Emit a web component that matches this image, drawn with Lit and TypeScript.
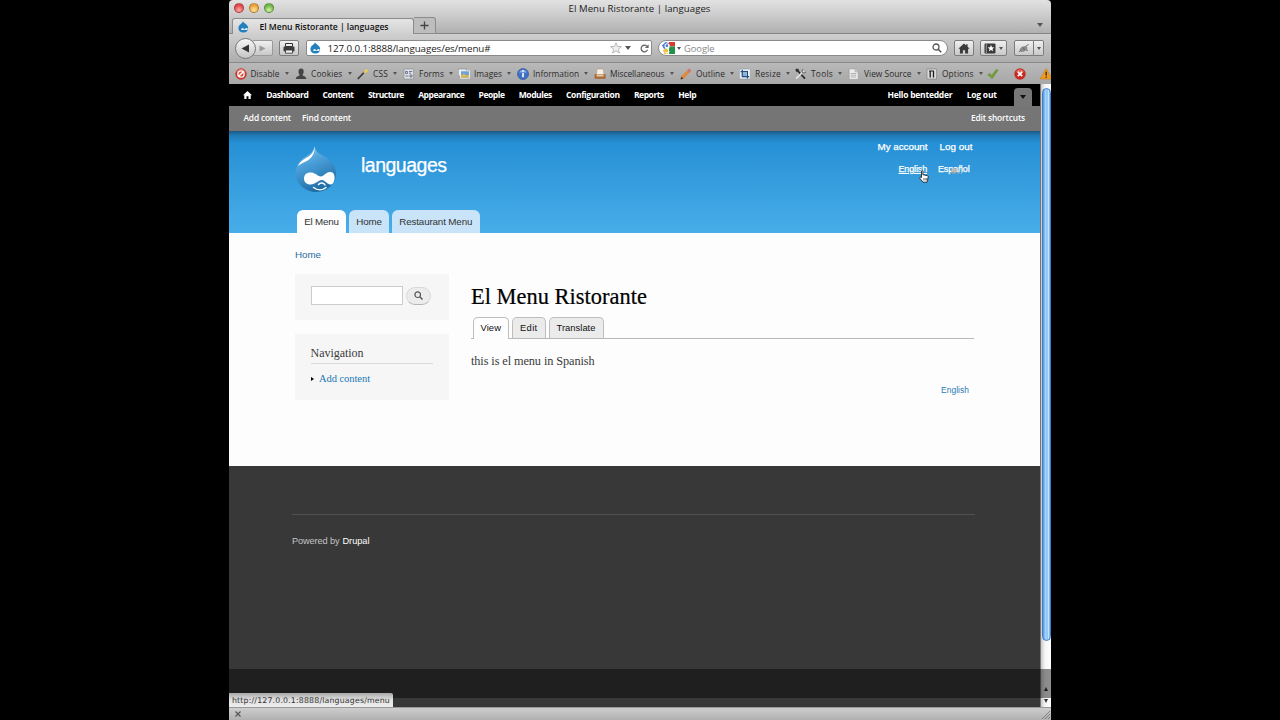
import { LitElement, html, svg, css } from "lit";
import { customElement } from "lit/decorators.js";

const LUCIDA = '"Open Sans", "Noto Sans", sans-serif';
const VERA = '"DejaVu Sans", sans-serif';
const HELV = '"Liberation Sans", Arial, sans-serif';
const SERIF = '"Liberation Serif", Georgia, serif';

const ctx = document.createElement("canvas").getContext("2d")!;

/** Text tracked so that its advance equals `width`. */
const fit = (text: string, width: number, size: number, family = LUCIDA, weight = 400) => {
  ctx.font = `${weight} ${size}px ${family}`;
  const spacing = (width - ctx.measureText(text).width) / text.length;
  return html`<span class="fit" style="width:${width}px;font:${weight} ${size}px/1 ${family};letter-spacing:${spacing.toFixed(3)}px">${text}</span>`;
};

const icons: Record<string, unknown> = {
  disable: svg`<circle cx="6" cy="6" r="5.7" fill="#c8372c"/><path d="M1.6 4a5 5 0 0 1 8.8 0" fill="none" stroke="#e98478" stroke-width="1"/><circle cx="6" cy="6" r="3.2" fill="#d9503f" stroke="#fff" stroke-width="1.3"/><path d="M3.9 8.1l4.2-4.2" stroke="#fff" stroke-width="1.4"/>`,
  cookies: svg`<path d="M3.5 3.4a2.6 3 0 0 1 5.2 0c0 1.7-.7 2.6-1.2 3.4 0 1.5 3.8 1.4 3.8 4.2H.8c0-2.8 3.8-2.7 3.8-4.2-.5-.8-1.1-1.7-1.1-3.4z" fill="#454545"/>`,
  css: svg`<path d="M.8 11L7.5 4" stroke="#3b3b3b" stroke-width="1.8"/><path d="M7 5l2.4-2.6" stroke="#d8c25a" stroke-width="2.4"/><path d="M9.6.8l.4 1.4 1.5.4-1.4.7-.3 1.4-.9-1.3-1.5.1 1-1z" fill="#f2d842"/>`,
  forms: svg`<path d="M1 1h9.6v10H1z" fill="#dfe1e4" stroke="#8b8f97" stroke-width=".7"/><path d="M2.5 3.5h2v2h-2zM6 3.5h3.2M6 5.2h2M2.5 8h3M7 7h2v2H7z" fill="none" stroke="#5d6d88" stroke-width=".9"/>`,
  images: svg`<path d="M.3 1h8v7h-8z" fill="#f4f4ee" stroke="#7b8186" stroke-width=".6"/><path d="M2.5 2.8h9v7.4h-9z" fill="#6ea1d9" stroke="#f2f2f2" stroke-width=".9"/><path d="M3 9.8V7.6l3-2 2.4 1.8 2.6-.6v3z" fill="#d8b85c"/>`,
  info: svg`<circle cx="6" cy="6" r="5.5" fill="#3f72c4" stroke="#2b4f92" stroke-width=".6"/><path d="M2 4.4a4.3 4.3 0 0 1 8 0z" fill="#89aee6"/><path d="M6 2.2v1.5M6 4.9v4.4" stroke="#fff" stroke-width="1.6"/>`,
  misc: svg`<path d="M3 1h6.4l.6 6H2.4z" fill="#f5efe4" stroke="#b09572" stroke-width=".6"/><path d="M.6 6.2h11v4.6H.6z" fill="#a86a36"/><path d="M2.6 6.5h7v2h-7z" fill="#e4cba6"/>`,
  outline: svg`<path d="M2.2 9.8l6.5-6.6" stroke="#e0893a" stroke-width="3.2"/><path d="M8.4 3.5l1.8-1.8" stroke="#c9776c" stroke-width="3.2"/><path d="M.5 11.5l.8-3 2.2 2.2z" fill="#4b3a2b"/>`,
  resize: svg`<path d="M.4 1h11v10H.4z" fill="#e9edf2" stroke="#909aa6" stroke-width=".6"/><path d="M3.3 1.8v6.8h6.9M1.6 3.6h6.8v6.8" fill="none" stroke="#254c78" stroke-width="1.2"/><path d="M4 4.2h3.8v3.8H4z" fill="#8db4dc"/>`,
  tools: svg`<path d="M1 1l9 9.6" stroke="#292929" stroke-width="1.7"/><path d="M1 10.6L9 3" stroke="#e4e4e4" stroke-width="1.6"/><path d="M8.3 1.2a2 2 0 1 0 2.6 2.6" fill="none" stroke="#787878" stroke-width="1.2"/><path d="M.4 2.2L3 .4l1.4 2L1.6 4.2z" fill="#353535"/>`,
  source: svg`<path d="M1.2.8h6l3 3v7.6h-9z" fill="#ececec" stroke="#969696" stroke-width=".6"/><path d="M7.2.8v3h3M2.7 5.5h5.5M2.7 7.2h5.5M2.7 9h5.5" fill="none" stroke="#a3a3a3" stroke-width=".8"/>`,
  options: svg`<path d="M1 1h9.6v10H1z" fill="#dcdcdc" stroke="#838383" stroke-width=".7"/><path d="M4.200 3v6.400M7.500 3v6.400" stroke="#1c1c1c" stroke-width="1.300"/><path d="M3 3h4.800" stroke="#1c1c1c"/>`,
  check: svg`<path d="M.8 6.800l2-1.400 2 2L9.300 1.600l1.800.6L5.200 10.600z" fill="#71a532" stroke="#53801f" stroke-width=".5"/>`,
  error: svg`<circle cx="6" cy="6" r="5.7" fill="#c8291f"/><path d="M1.8 4a4.6 4.6 0 0 1 8.4 0z" fill="#dd6b5f"/><path d="M3.8 3.8l4.4 4.4M8.2 3.8L3.8 8.2" stroke="#fff" stroke-width="1.7"/>`,
  warn: svg`<path d="M6.2.6L12 11H.2z" fill="#f09c20" stroke="#c97a12" stroke-width=".6"/><path d="M6.2 3.8v3.6M6.2 8.4v1.4" stroke="#3a2a10" stroke-width="1.4"/>`,
};
const icon = (name: string) => html`<svg class="ic" viewBox="0 0 12 12">${icons[name]}</svg>`;

const favicon = html`<svg class="fav" viewBox="0 0 12 13">
  <path d="M5.4.3C6 2 8 2.6 9.7 4.3c2.7 2.9 1.5 8-3.7 8.3C1 12.7-.5 8.5 1 5.5 2 3.6 4.8 2.6 5.4.3z" fill="#2480bd"/>
  <path d="M3.400 8.600c1.400-1.600 2.600.2 3.600.1s2.200-1.400 3.600-.5c.4 1.800-1.600 1.900-3 1-1.400.3-3.400 1.600-4.200-.6z" fill="#fff"/></svg>`;

// [icon, label, label width, item width]
const DEV: [string, string, number, number][] = [
  ["disable", "Disable", 29, 60.5], ["cookies", "Cookies", 31.5, 62], ["css", "CSS", 15, 46],
  ["forms", "Forms", 25, 55], ["images", "Images", 28, 59], ["info", "Information", 46, 77],
  ["misc", "Miscellaneous", 54.5, 86], ["outline", "Outline", 29, 59], ["resize", "Resize", 26, 56],
  ["tools", "Tools", 22, 53], ["source", "View Source", 47.5, 78], ["options", "Options", 31.5, 61],
];
const ADMIN: [string, number][] = [
  ["Dashboard", 42], ["Content", 31], ["Structure", 36], ["Appearance", 46], ["People", 26],
  ["Modules", 33], ["Configuration", 53.5], ["Reports", 30], ["Help", 18],
];

@customElement("app-root")
export class AppRoot extends LitElement {
  static styles = css`
    :host { display: flex; justify-content: center; width: 1280px; height: 720px; background: #000; overflow: hidden; }
    * { box-sizing: border-box; }
    svg { display: block; flex: none; }
    .fit { display: block; flex: none; white-space: nowrap; }
    .window { width: 822px; height: 720px; display: flex; flex-direction: column; border-radius: 4px 4px 0 0; overflow: hidden; position: relative; }
    .row { display: flex; align-items: center; flex: none; }
    .top { height: 34px; background: linear-gradient(#e2e2e2, #cacaca 50%, #b0b0b0); border-bottom: 1px solid #858585; display: flex; flex-direction: column; flex: none; }
    .title { height: 16px; padding-left: 5px; color: #222; }
    .title .fit { margin-top: 1px; }
    .lights { display: flex; gap: 5px; width: 334.5px; }
    .light { width: 10px; height: 10px; border-radius: 50%; border: 1px solid #0004; }
    .red { background: radial-gradient(circle at 50% 75%, #ffb0a8, #e2474b 65%); }
    .amber { background: radial-gradient(circle at 50% 75%, #ffe6a0, #eda239 65%); }
    .green { background: radial-gradient(circle at 50% 75%, #d5f5a8, #6fb548 65%); }
    .tabs { height: 18px; padding-left: 3px; align-items: flex-end; flex: none; display: flex; }
    .tab { height: 17px; width: 182px; border: 1px solid #8c8c8c; border-bottom: 0; border-radius: 3px 3px 0 0; background: linear-gradient(#e5e5e5, #cecece); display: flex; align-items: center; gap: 10.5px; padding-left: 5px; margin-bottom: -1px; color: #111; }
    .plus { height: 17px; width: 22px; border: 1px solid #8c8c8c; border-left: 0; border-radius: 0 3px 0 0; display: flex; align-items: center; justify-content: center; background: #bdbdbd; }
    .tabs .caret { margin: 0 8px 7px auto; }
    .fav { width: 11px; height: 12px; }
    .nav { height: 29px; background: linear-gradient(#cfcfcf, #adadad); border-bottom: 1px solid #888; padding-left: 6px; }
    .btn { height: 16px; border: 1px solid #7c7c7c; border-radius: 2px; background: linear-gradient(#f0f0f0, #c9c9c9); display: flex; align-items: center; justify-content: center; gap: 3px; flex: none; }
    .back { width: 21px; height: 21px; border-radius: 50%; border: 1px solid #777; background: linear-gradient(#f7f7f7, #c4c4c4); display: flex; align-items: center; justify-content: center; z-index: 1; }
    .fwd { width: 21px; margin: 0 6px 0 -4px; border-color: #999; }
    .print { width: 20px; margin-right: 6.5px; }
    .url { width: 346px; height: 16px; flex: none; border: 1px solid #8a8a8a; background: #fff; display: flex; align-items: center; border-radius: 2px; padding-left: 3px; color: #222; }
    .url .fit { margin: 2px 119px 0 7px; }
    .url .star { margin-right: 3px; }
    .url .reload { margin-left: 9px; }
    .search { width: 290px; height: 16px; flex: none; border: 1px solid #8a8a8a; border-radius: 8px; background: #fff; margin: 0 6px; display: flex; align-items: center; padding: 0 5px 0 3px; color: #888; }
    .search .caret { margin: 0 3.5px 0 2px; }
    .search .fit { margin-top: 2px; }
    .search .mag { margin-left: auto; }
    .home { width: 20.5px; margin-right: 5.5px; }
    .book { width: 27px; margin-right: 7.5px; }
    .bug { width: 20px; border-radius: 2px 0 0 2px; }
    .more { width: 10px; border-left: 0; border-radius: 0 2px 2px 0; }
    .caret { width: 0; height: 0; flex: none; border: 3px solid transparent; border-top: 4px solid #555; border-bottom: 0; }
    .caret.s { border-width: 2px; border-top-width: 3px; border-bottom: 0; }
    .dev { height: 21px; background: linear-gradient(#b9b9b9, #a7a7a7); padding-left: 5.5px; color: #2c2c2c; overflow: hidden; }
    .item { display: flex; align-items: center; flex: none; }
    .item .fit { margin: 1px 5px 0 4px; }
    .ic { width: 12px; height: 12px; }
    .ic.sp { margin-right: 15px; }
    .ic.end { margin-left: -1px; }
    .body { flex: 1; display: flex; min-height: 0; }
    .page { width: 811px; display: flex; flex-direction: column; background: #fdfdfd; }
    .admin { height: 22px; background: #000; color: #fff; padding: 0 8px 0 14px; gap: 14.3px; }
    .admin .hello { margin-left: auto; }
    .toggle { align-self: flex-end; width: 18px; height: 18px; border-radius: 4px 4px 0 0; background: #777; display: flex; align-items: center; justify-content: center; margin-left: 3px; }
    .toggle .caret { border-top-color: #111; }
    .shortcuts { height: 25px; background: #757575; color: #fff; padding: 0 15px 0 14.5px; gap: 11px; }
    .shortcuts .edit { margin-left: auto; }
    .header { height: 102px; flex: none; background: linear-gradient(#1d577f 0, #2079b4 4px, #2590d6 12px, #3299db 40px, #48aeea 100%); display: flex; justify-content: space-between; padding: 0 67.5px 0 66px; color: #fff; -webkit-text-stroke: .25px #fff; }
    .brand { display: flex; flex-direction: column; justify-content: space-between; }
    .brandrow { display: flex; padding-top: 14px; gap: 23px; }
    .brandrow .fit { margin-top: 11px; }
    .sitetabs { display: flex; gap: 3px; padding-left: 2px; color: #333; -webkit-text-stroke: 0; }
    .sitetab { height: 23px; border-radius: 6px 6px 0 0; background: #c9e4f8; display: flex; align-items: center; padding: 1px 7.25px 0; }
    .sitetab.on { background: #fdfdfd; }
    .links { display: flex; flex-direction: column; align-items: flex-end; padding-top: 10.5px; gap: 13.5px; }
    .pair { display: flex; gap: 12px; }
    .pair.lang { padding-right: 3px; gap: 11px; }
    .under { text-decoration: underline; }
    .content { height: 233px; flex: none; padding: 17px 66px 0 66px; color: #3b3b3b; }
    .crumb { color: #1d6da3; display: flex; }
    .cols { display: flex; margin-top: 14px; gap: 22px; }
    .side { width: 154px; display: flex; flex-direction: column; gap: 14px; flex: none; }
    .block { background: #f6f6f6; padding: 0 16px 0 15.5px; }
    .find { height: 46px; display: flex; align-items: center; gap: 3px; padding-bottom: 2px; }
    .input { width: 92px; height: 19px; border: 1px solid #ccc; background: #fff; flex: none; }
    .go { width: 25px; height: 18px; border: 1px solid #d8d8d8; border-bottom-color: #b5b5b5; border-radius: 9px; background: #ececec; display: flex; align-items: center; justify-content: center; flex: none; }
    .navblock { height: 66px; padding-top: 13px; }
    .heading { padding-bottom: 4px; border-bottom: 1px solid #dadada; }
    .leaf { display: flex; align-items: center; gap: 5.5px; margin-top: 10px; color: #1c78b5; }
    .tri { width: 0; height: 0; border: 2.5px solid transparent; border-left: 3.5px solid #000; border-right: 0; }
    .main { flex: 1; display: flex; flex-direction: column; }
    .h1 { color: #000; padding-top: 12px; height: 43px; -webkit-text-stroke: .2px #000; }
    .ptabs { display: flex; gap: 3px; border-bottom: 1px solid #b8b8b8; padding-left: 1.5px; color: #111; height: 22px; }
    .ptab { height: 21px; border: 1px solid #bdbdbd; border-bottom: 0; border-radius: 5px 5px 0 0; background: #ebebeb; display: flex; align-items: center; padding: 0 7px; }
    .ptab.on { background: #fdfdfd; height: 22px; padding-bottom: 1px; }
    .para { padding-top: 16px; }
    .trans { padding: 19px 5px 0 0; align-self: flex-end; color: #2b79b4; }
    .footer { flex: 1; background: #383838; padding: 48px 65px 0 63px; color: #c4c4c4; }
    .rule { border-top: 1px solid #505050; margin-bottom: 21.5px; }
    .powered { display: flex; gap: 3px; }
    .powered .white { color: #fff; }
    .scroll { width: 11px; background: linear-gradient(90deg, #c9c9c9, #f6f6f6 40%, #fff); display: flex; flex-direction: column; align-items: center; justify-content: space-between; padding: 4px 0 2px; border-left: 1px solid #777; }
    .thumb { width: 9px; height: 553px; border-radius: 5px; border: 1px solid #3d7cc8; background: linear-gradient(90deg, #4d94de, #a5d2fa 35%, #86c0f6 60%, #c4e8ff 80%, #5f9fe0); }
    .arrows { display: flex; flex-direction: column; align-items: center; gap: 8px; }
    .up { width: 0; height: 0; border: 2.5px solid transparent; border-bottom: 4px solid #333; border-top: 0; }
    .down { width: 0; height: 0; border: 2.5px solid transparent; border-top: 4px solid #333; border-bottom: 0; }
    .arrows .down { margin-bottom: 2px; }
    .statusbar { height: 13px; flex: none; background: linear-gradient(#cecece, #b0b0b0); border-top: 1px solid #999; display: flex; align-items: center; justify-content: space-between; padding: 0 1px 0 6px; }
    .band { position: absolute; left: 0; right: 0; top: 669px; height: 29px; background: rgba(0, 0, 0, .44); }
    .hint { position: absolute; left: 0; top: 693px; width: 164px; height: 14px; padding: 4px 0 0 3px; background: linear-gradient(#a8a8a8, #e2e2e2 50%, #eee); border-radius: 0 2px 0 0; color: #333; }
    .hand { position: absolute; left: 690px; top: 170px; }
    .spin { position: absolute; left: 721px; top: 166px; }
  `;

  render() {
    return html`<div class="window">
      <div class="top">
        <div class="row title">
          <div class="lights"><i class="light red"></i><i class="light amber"></i><i class="light green"></i></div>
          ${fit("El Menu Ristorante | languages", 142, 9.6)}
        </div>
        <div class="tabs">
          <div class="tab">${favicon}${fit("El Menu Ristorante | languages", 129, 8.6, LUCIDA, 600)}</div>
          <div class="plus"><svg width="9" height="9"><path d="M4.5 .5v8M.5 4.5h8" stroke="#444" stroke-width="1.3"/></svg></div>
          <i class="caret"></i>
        </div>
      </div>
      <div class="row nav">
        <div class="back"><svg width="9" height="9"><path d="M8 .5v8L.5 4.5z" fill="#333"/></svg></div>
        <div class="btn fwd"><svg width="7" height="7"><path d="M.5.5v6l6-3z" fill="#999"/></svg></div>
        <div class="btn print"><svg width="12" height="11"><path d="M2.5.5h7v3h-7z" fill="#eee" stroke="#333"/><rect x=".5" y="3.5" width="11" height="5" rx="1" fill="#3c3c3c"/><path d="M2.5 7h7v3.2h-7z" fill="#eee" stroke="#333" stroke-width=".8"/></svg></div>
        <div class="url">${favicon}${fit("127.0.0.1:8888/languages/es/menu#", 163, 9.8)}
          <svg class="star" width="12" height="12" viewBox="0 0 12 12"><path d="M6 .8l1.5 3.6 3.9.3-3 2.5 1 3.8L6 8.9 2.6 11l1-3.8-3-2.5 3.9-.3z" fill="#eee" stroke="#aaa" stroke-width=".8"/></svg>
          <i class="caret"></i>
          <svg class="reload" width="9" height="9" viewBox="0 0 9 9"><path d="M7.5 5.8A3.3 3.3 0 1 1 6.6 2" fill="none" stroke="#666" stroke-width="1.3"/><path d="M8.6.2v3.9H4.8z" fill="#666"/></svg>
        </div>
        <div class="search">
          <svg width="13" height="12" viewBox="0 0 13 12"><path d="M0 0h13v12H0z" fill="#fff"/><path d="M7 0h6v4.5H7z" fill="#d83a32"/><path d="M7 4.5h6V12H7z" fill="#22924a"/><path d="M0 3.5L3.5 0 7 1v4L2 7z" fill="#4b7cd0"/><path d="M1 8l5-2v6H2.5z" fill="#efbd35"/><circle cx="5" cy="3.7" r="2" fill="none" stroke="#fff" stroke-width="1.1"/><path d="M6.8 2v4L5 7.2M3 9.5a2 1.6 0 1 0 4-.5" fill="none" stroke="#fff" stroke-width="1.1"/></svg>
          <i class="caret s"></i>${fit("Google", 30.5, 9.4)}
          <svg class="mag" width="10" height="10"><circle cx="4" cy="4" r="3" fill="none" stroke="#555" stroke-width="1.3"/><path d="M6.2 6.2l3 3" stroke="#555" stroke-width="1.6"/></svg>
        </div>
        <div class="btn home"><svg width="12" height="11"><path d="M6 .5L.3 5.8h1.6v4.7h3V7.2h2.2v3.3h3V5.8h1.6L9.6 3.7V1.2H8.2v1.3z" fill="#3a3a3a"/></svg></div>
        <div class="btn book"><svg width="12" height="11"><rect x=".5" y=".5" width="11" height="10" rx="1" fill="#3a3a3a"/><path d="M2.3 1v9" stroke="#999"/><path d="M7 2l1 2.2 2.3.2-1.8 1.5.6 2.3L7 7 4.9 8.2l.6-2.3-1.8-1.5 2.3-.2z" fill="#fff"/></svg><i class="caret s"></i></div>
        <div class="btn bug"><svg width="12" height="9"><ellipse cx="5.5" cy="5" rx="4" ry="2.6" fill="#8a8a8a" transform="rotate(-25 5.5 5)"/><path d="M1 8l2-2M8 2l2.5-1.5M4 3l3 3M8 6l2 .5" stroke="#6b6b6b"/></svg></div>
        <div class="btn more"><i class="caret s"></i></div>
      </div>
      <div class="row dev">
        ${DEV.map(([ic, label, w, total]) => html`<div class="item" style="width:${total}px">${icon(ic)}${fit(label, w, 8.4)}<i class="caret s"></i></div>`)}
        <svg class="ic sp" viewBox="0 0 12 12">${icons.check}</svg>
        <svg class="ic sp" viewBox="0 0 12 12">${icons.error}</svg>
        <svg class="ic end" viewBox="0 0 12 12">${icons.warn}</svg>
      </div>
      <div class="body">
        <div class="page">
          <div class="row admin">
            <svg width="9" height="8"><path d="M4.5 0L0 4.2h1.3V8h2.2V5.2h2V8h2.2V4.2H9z" fill="#fff"/></svg>
            ${ADMIN.map(([label, w]) => fit(label, w, 8.5, LUCIDA, 700))}
            <div class="hello">${fit("Hello bentedder", 65, 8.5, LUCIDA, 700)}</div>
            ${fit("Log out", 30, 8.5, LUCIDA, 700)}
            <div class="toggle"><i class="caret"></i></div>
          </div>
          <div class="row shortcuts">
            ${fit("Add content", 47.5, 8.4, LUCIDA, 600)}${fit("Find content", 49, 8.4, LUCIDA, 600)}
            <div class="edit">${fit("Edit shortcuts", 54, 8.4, LUCIDA, 600)}</div>
          </div>
          <div class="header">
            <div class="brand">
              <div class="brandrow">
                <svg width="43" height="49" viewBox="0 0 43 49">
                  <defs><linearGradient id="drop" x1="0" y1="0" x2=".4" y2="1"><stop offset="0" stop-color="#8fc8ee"/><stop offset=".45" stop-color="#4a9fd8"/><stop offset="1" stop-color="#226fa8"/></linearGradient></defs>
                  <path d="M19.500 1C20.500 8 26 9 32 13c6 4.500 9.500 9 9 17C40.500 40 31 47 21 47S.5 39 .5 28C.5 20 5 15 10 12c5-3 8.500-5 9.500-11z" fill="url(#drop)"/>
                  <path d="M19.500 1.500c-.5 6-3.500 9-8.500 11.500-4 2-7 5-8 8 3-3 7-3.500 10.500-6 4-3 6.500-7 6-13.500z" fill="#fff"/>
                  <path d="M9 33.500c0-4.500 3.500-6.500 7.500-6 4.500.6 6.500 4 9.500 4s4.500-4.500 9-4.500c4 0 5 3.500 4.500 7-.5 3.500-2 6-4.500 5.500-3.500-.7-5-4.500-8.500-4.500-3 0-6 4.500-11 4.500-4 0-6.500-2.500-6.500-6z" fill="#fff"/>
                  <path d="M23.500 39.500c1.500-2 5.500-2 6.500.5M18.500 42.500c4 3 9 3 12.500 0" fill="none" stroke="#fff" stroke-width="1.500" stroke-linecap="round"/>
                </svg>
                ${fit("languages", 85.500, 19.500, HELV)}
              </div>
              <div class="sitetabs">
                <div class="sitetab on">${fit("El Menu", 34.5, 9.8, HELV)}</div>
                <div class="sitetab">${fit("Home", 25.5, 9.8, HELV)}</div>
                <div class="sitetab">${fit("Restaurant Menu", 73, 9.8, HELV)}</div>
              </div>
            </div>
            <div class="links">
              <div class="pair">${fit("My account", 50, 9.8, HELV)}${fit("Log out", 33, 9.8, HELV)}</div>
              <div class="pair lang"><span class="under">${fit("English", 28.5, 9, HELV)}</span>${fit("Español", 31.5, 9, HELV)}</div>
            </div>
          </div>
          <div class="content">
            <div class="crumb">${fit("Home", 26, 9.8, HELV)}</div>
            <div class="cols">
              <div class="side">
                <div class="block find"><div class="input"></div><div class="go"><svg width="9" height="9"><circle cx="3.7" cy="3.7" r="2.8" fill="none" stroke="#555" stroke-width="1.2"/><path d="M5.8 5.8l2.7 2.7" stroke="#555" stroke-width="1.5"/></svg></div></div>
                <div class="block navblock">
                  <div class="heading">${fit("Navigation", 53, 12, SERIF)}</div>
                  <div class="leaf"><i class="tri"></i>${fit("Add content", 51, 10.5, SERIF)}</div>
                </div>
              </div>
              <div class="main">
                <div class="h1">${fit("El Menu Ristorante", 176, 22.4, SERIF)}</div>
                <div class="ptabs">
                  <div class="ptab on">${fit("View", 20.5, 9.4, HELV)}</div>
                  <div class="ptab">${fit("Edit", 17.5, 9.4, HELV)}</div>
                  <div class="ptab">${fit("Translate", 39, 9.4, HELV)}</div>
                </div>
                <div class="para">${fit("this is el menu in Spanish", 123.5, 12.3, SERIF)}</div>
                <div class="trans">${fit("English", 28, 8.4, HELV)}</div>
              </div>
            </div>
          </div>
          <div class="footer">
            <div class="rule"></div>
            <div class="powered">${fit("Powered by", 47.5, 9.2, HELV)}<span class="white">${fit("Drupal", 27, 9.2, HELV)}</span></div>
          </div>
        </div>
        <div class="scroll"><i class="thumb"></i><div class="arrows"><i class="up"></i><i class="down"></i></div></div>
      </div>
      <div class="statusbar">
        <svg width="6" height="6"><path d="M.5.5l5 5M5.5.5l-5 5" stroke="#555" stroke-width="1.2"/></svg>
        <svg width="9" height="9"><path d="M1 9l8-8M4 9l5-5M7 9l2-2" stroke="#777" stroke-width=".9"/></svg>
      </div>
      <div class="band"></div>
      <div class="hint">${fit("http://127.0.0.1:8888/languages/menu", 158, 7.8, VERA)}</div>
      <svg class="spin" width="18" height="10"><circle cx="4" cy="5" r="3" fill="#b5a995" opacity=".65"/><path d="M8 8l3-6M11 8l3-6" stroke="#d2c8b8" opacity=".6"/></svg>
      <svg class="hand" width="10" height="13" viewBox="0 0 10 13"><path d="M2.5 7.5V1.2c0-.9 1.4-.9 1.4 0v3.5l4.3.9c.9.2 1 .8.9 1.6l-.5 3-.6 2H4L1 8.6c-.8-1.2.2-1.8 1.5-1.1z" fill="#fff" stroke="#222" stroke-width=".9"/><path d="M4.8 8v2.5M6.2 8v2.5M7.6 8v2.5" stroke="#222" stroke-width=".6"/></svg>
    </div>`;
  }
}
